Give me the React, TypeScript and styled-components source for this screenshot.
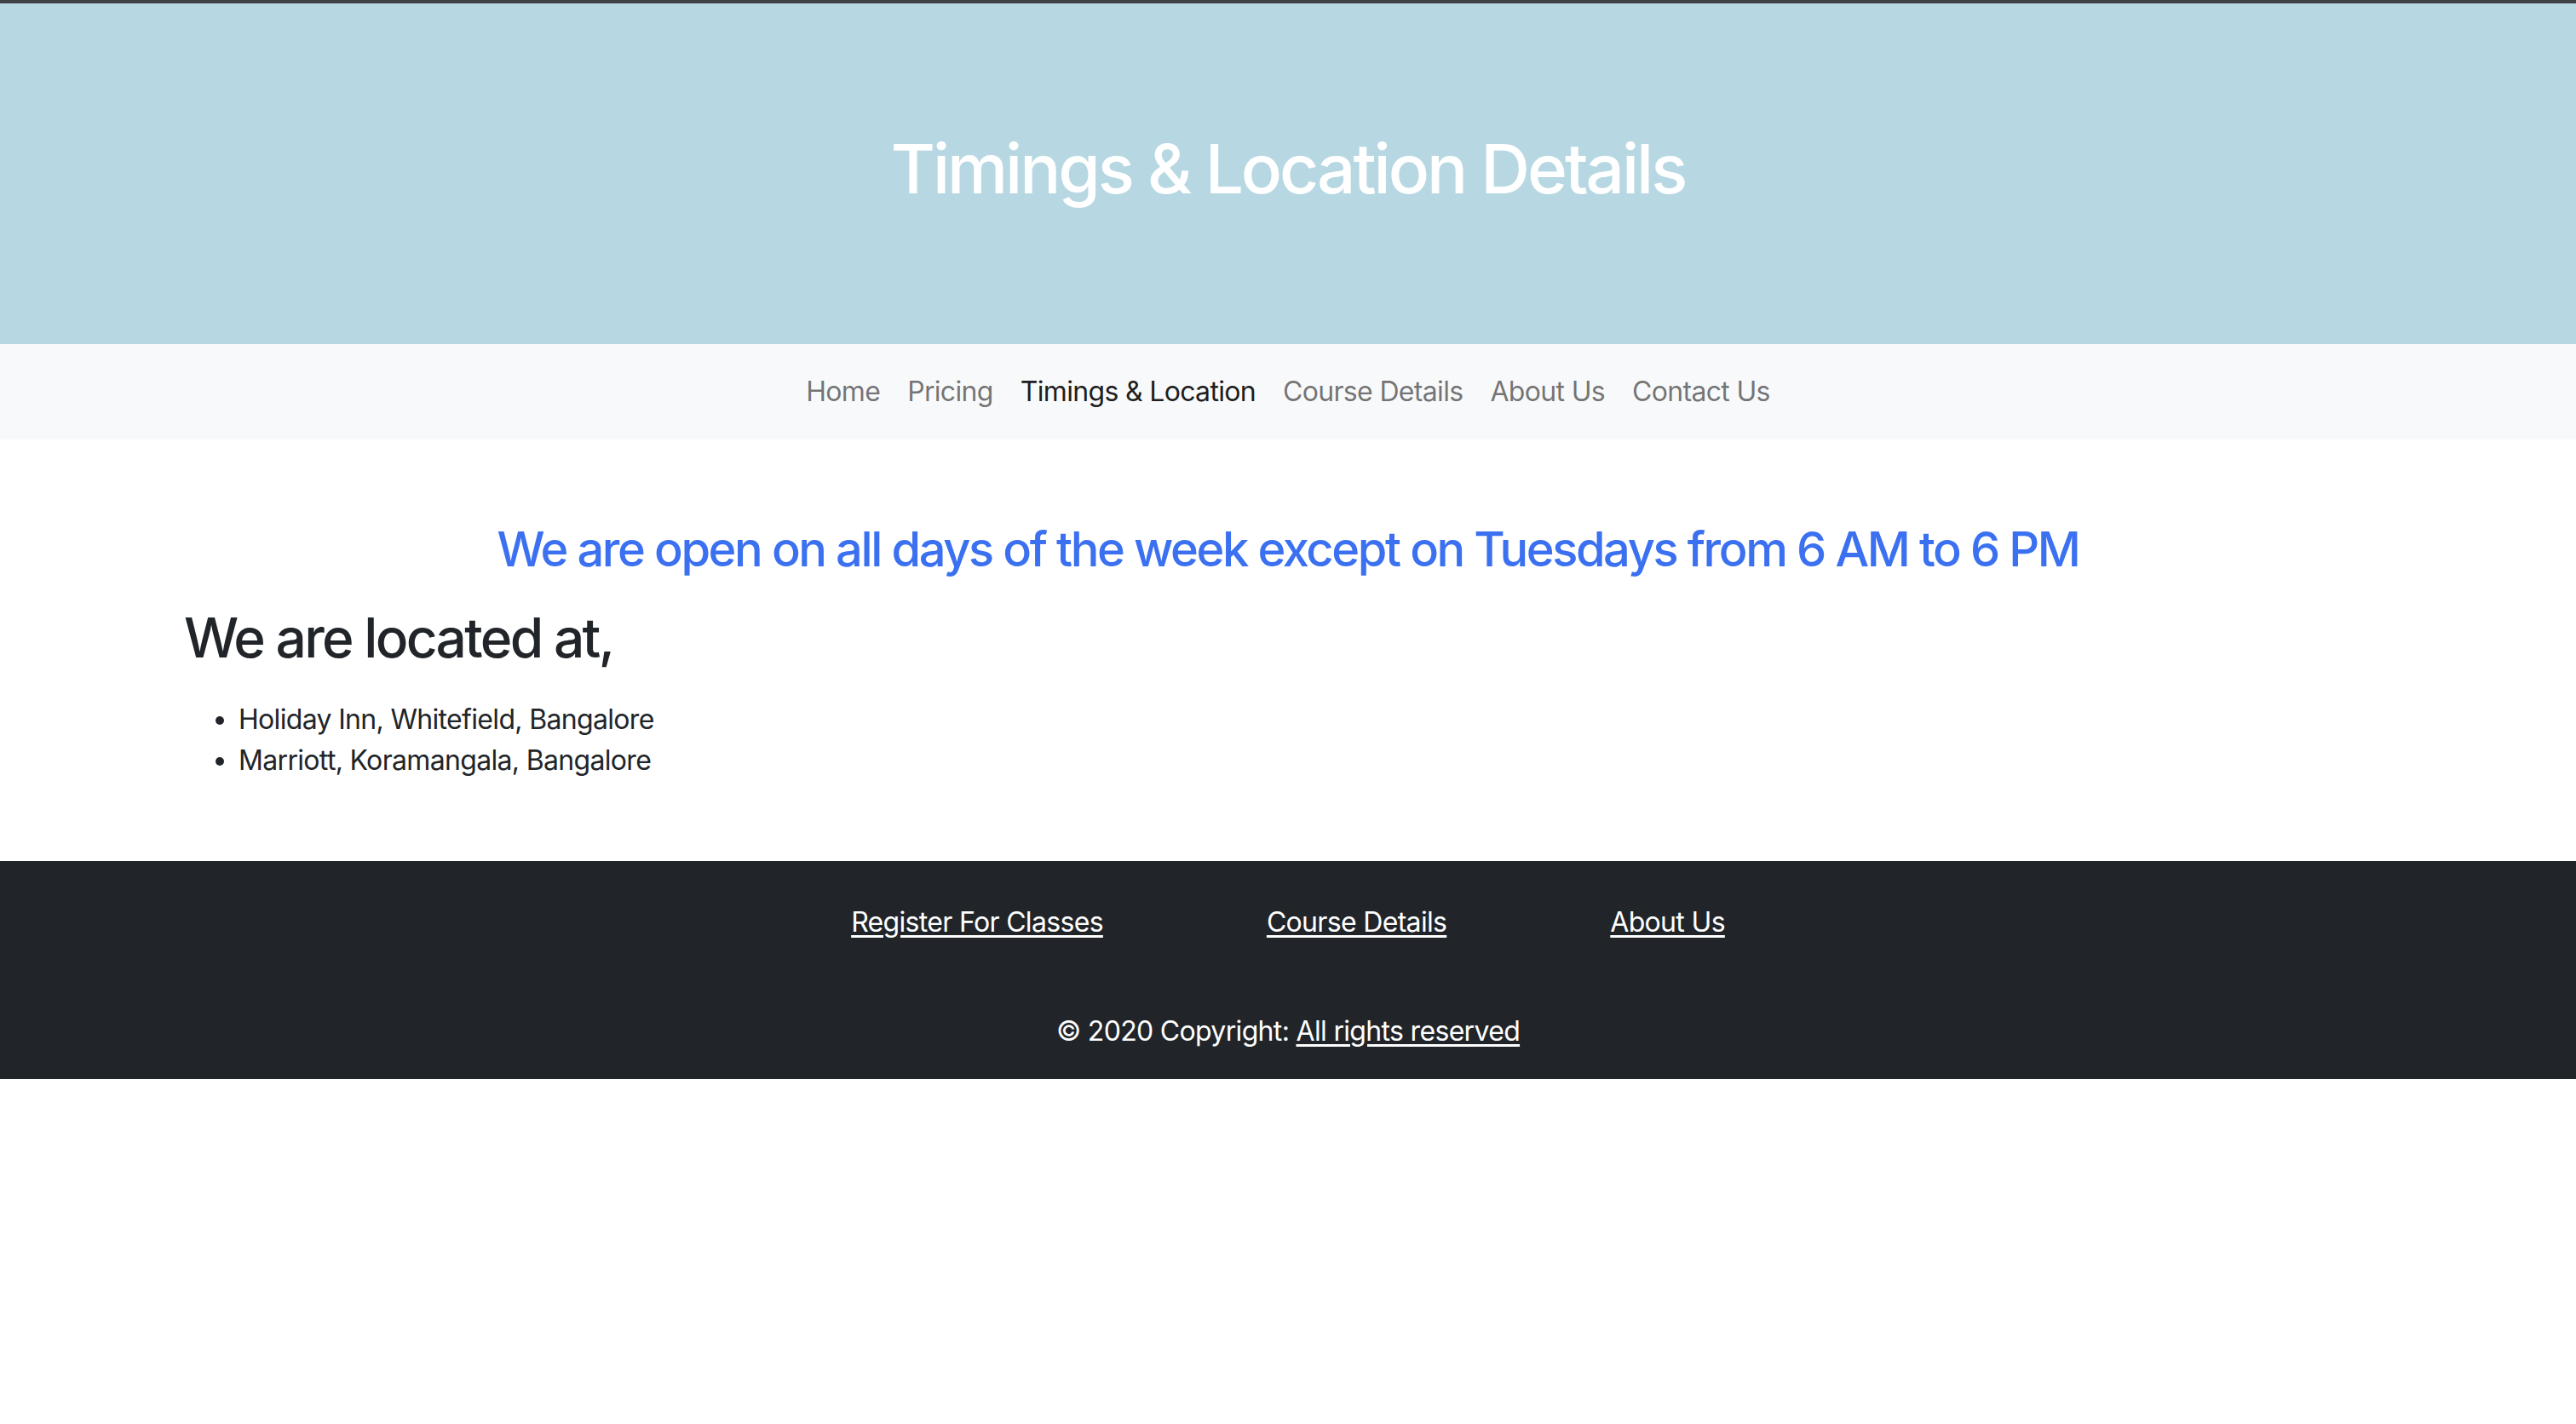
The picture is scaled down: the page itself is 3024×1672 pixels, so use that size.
import React from "react";
import styled, { createGlobalStyle } from "styled-components";

const GlobalStyle = createGlobalStyle`
  html, body {
    margin: 0;
    padding: 0;
    background: #ffffff;
  }
  body {
    font-family: Inter, "Liberation Sans", sans-serif;
    font-size: 32px;
    line-height: 1.5;
    letter-spacing: -0.021em;
    color: #212529;
  }
  * {
    box-sizing: border-box;
  }
`;

const Page = styled.div`
  border-top: 4px solid #3f4044;
`;

const Hero = styled.header`
  height: 400px;
  background-color: #b7d8e3;
  display: flex;
  align-items: center;
  justify-content: center;
  padding-bottom: 12px;
`;

const HeroTitle = styled.h1`
  margin: 0;
  font-size: 80px;
  font-weight: 500;
  line-height: 1.2;
  letter-spacing: -0.038em;
  color: #ffffff;
`;

const NavBar = styled.nav`
  background-color: #f8f9fa;
  height: 112px;
  display: flex;
  align-items: center;
  justify-content: center;
`;

const NavList = styled.ul`
  list-style: none;
  margin: 0;
  padding: 0;
  display: flex;
`;

const NavLink = styled.a<{ active?: boolean }>`
  display: block;
  padding: 16px;
  font-size: 32px;
  line-height: 48px;
  text-decoration: none;
  cursor: pointer;
  color: ${(props) => (props.active ? "rgba(0, 0, 0, 0.9)" : "rgba(0, 0, 0, 0.55)")};

  &:hover {
    color: rgba(0, 0, 0, 0.7);
  }
`;

const Container = styled.main`
  max-width: 2640px;
  margin: 0 auto;
  padding: 96px 24px 0;
`;

const OpenHours = styled.h3`
  margin: 0 0 32px;
  font-size: 56px;
  font-weight: 500;
  line-height: 1.2;
  letter-spacing: -0.043em;
  text-align: center;
  color: #3b71f0;
`;

const LocationTitle = styled.h2`
  margin: 0 0 33px;
  font-size: 64px;
  font-weight: 500;
  line-height: 1.2;
  letter-spacing: -0.042em;
`;

const LocationList = styled.ul`
  margin: 0;
  padding: 0 0 94px 64px;
  font-size: 32px;
  line-height: 48px;
`;

const Footer = styled.footer`
  background-color: #212529;
  color: #ffffff;
  text-align: center;
`;

const FooterLinks = styled.div`
  display: flex;
  justify-content: center;
  gap: 192px;
  padding: 48px;
`;

const FooterLink = styled.a`
  color: #ffffff;
  text-decoration: underline;
  text-underline-offset: 4px;
  text-decoration-thickness: 3px;
  cursor: pointer;
`;

const Copyright = styled.div`
  padding: 32px;
`;

const navItems = [
  "Home",
  "Pricing",
  "Timings & Location",
  "Course Details",
  "About Us",
  "Contact Us",
];

const App: React.FC = () => {
  return (
    <Page>
      <GlobalStyle />
      <Hero>
        <HeroTitle>Timings &amp; Location Details</HeroTitle>
      </Hero>
      <NavBar>
        <NavList>
          {navItems.map((item) => (
            <li key={item}>
              <NavLink active={item === "Timings & Location"}>{item}</NavLink>
            </li>
          ))}
        </NavList>
      </NavBar>
      <Container>
        <OpenHours>
          We are open on all days of the week except on Tuesdays from 6 AM to 6 PM
        </OpenHours>
        <LocationTitle>We are located at,</LocationTitle>
        <LocationList>
          <li>Holiday Inn, Whitefield, Bangalore</li>
          <li>Marriott, Koramangala, Bangalore</li>
        </LocationList>
      </Container>
      <Footer>
        <FooterLinks>
          <FooterLink>Register For Classes</FooterLink>
          <FooterLink>Course Details</FooterLink>
          <FooterLink>About Us</FooterLink>
        </FooterLinks>
        <Copyright>
          © 2020 Copyright: <FooterLink>All rights reserved</FooterLink>
        </Copyright>
      </Footer>
    </Page>
  );
};

export default App;
